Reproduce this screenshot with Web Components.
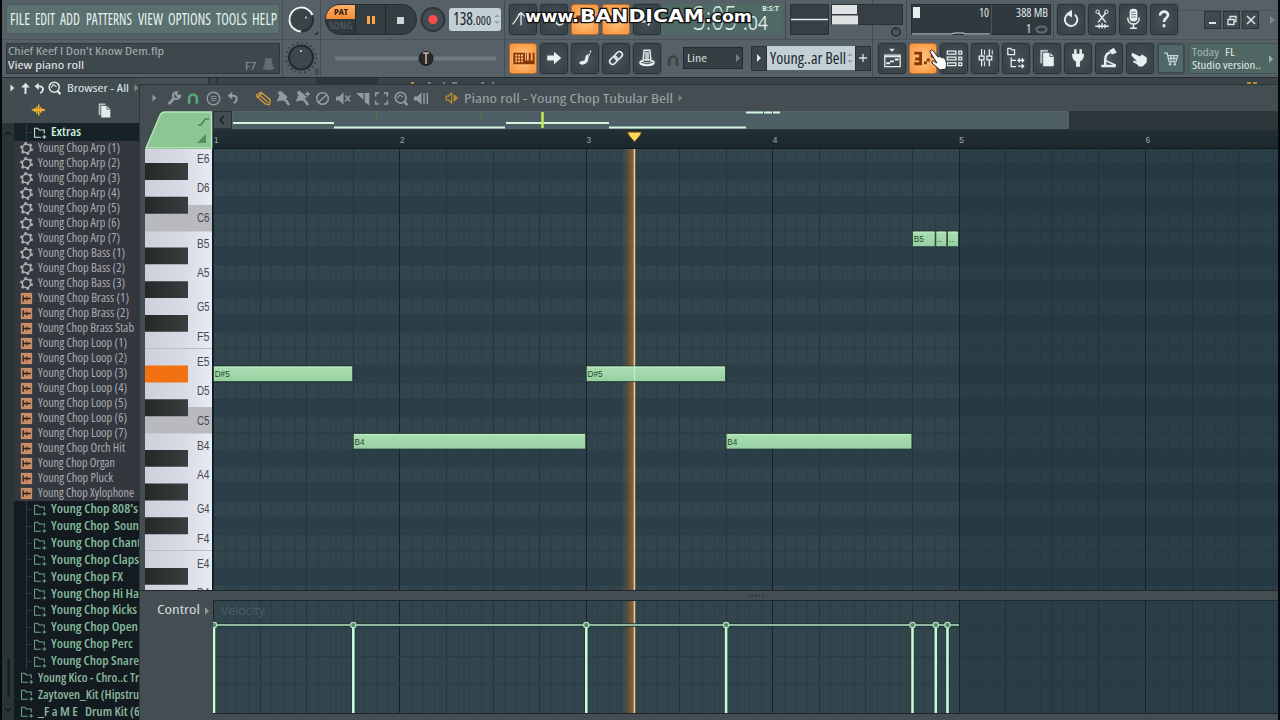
<!DOCTYPE html>
<html lang="en">
<head>
<meta charset="utf-8">
<title>Piano roll</title>
<style>
    html, body { margin: 0; width: 1280px; height: 720px; overflow: hidden; background: #050708; }
    body { font-family: "Open Sans", "Noto Sans", sans-serif; color: #e4eaec; }
</style>
</head>
<body>
<daw-app></daw-app>
<script>
    function attach(host, html) {
        const template = document.createElement('template');
        template.innerHTML = html;
        const root = host.attachShadow({ mode: 'open' });
        root.appendChild(template.content.cloneNode(true));
        return root;
    }

    // one line of text squeezed to a given width
    function t(text, width, size, color, extra) {
        return `<fit-text data-width="${width}" data-size="${size}" style="color:${color};${extra || ''}">${text}</fit-text>`;
    }

    class FitText extends HTMLElement {
        connectedCallback() {
            const w = +this.dataset.width, s = +this.dataset.size, h = Math.round(s * 1.2);
            const root = attach(this, `<style>
                    :host { display: block; flex: none; width: ${w}px; height: ${h}px; font-stretch: condensed; }
                    svg { display: block; overflow: visible; }
                    text { white-space: pre; fill: currentColor; }
                </style>
                <svg width="${w}" height="${h}"><text x="0" y="${(h / 2 + s * .36).toFixed(2)}" font-size="${s}" textLength="${w}" lengthAdjust="spacingAndGlyphs"></text></svg>`);
            root.querySelector('text').textContent = this.textContent;
        }
    }
    customElements.define('fit-text', FitText);

    const line = 'fill="none" stroke="currentColor" ';
    const ICONS = {
        slide: `<path ${line} stroke-width="1.300" d="M3 20C6 18 8 12 11 9M12 8v13M9 10l3-2 4 4"/>`,
        wave: `<path ${line} stroke-width="1.5" d="M4 17h8M16 17a4 4 0 1 0 7-3"/>`,
        block: `<path fill="currentColor" d="M5 11h5v7H5zM12 15h10v3H12z"/>`,
        hook: `<path ${line} stroke-width="2" d="M8 17h10l-3-4m3 4l-3 4"/>`,
        typing: `<path fill="currentColor" d="M4 9h12v12H4zM16 9h2v8h2V9h2v8h2V9h2v12H16z"/><path fill="#ffc283" d="M6 11h2v2H6zM9 11h2v2H9zM12 11h2v2h-2zM6 14h2v2H6zM9 14h2v2H9zM12 14h2v2h-2zM6 17h2v2H6zM9 17h2v2H9zM12 17h2v2h-2zM16 9h1v8h-1z"/>`,
        arrow: `<path fill="currentColor" d="M7 12h7V8l7.500 6.500-7.500 6.500v-4H7z"/>`,
        notes: `<path fill="currentColor" d="M8 20c1-4 5-1 6-4s0-4 3-5l1 2c-1 2 0 5-3 7s-5 2-7 0z"/><path ${line} stroke-width="1.500" stroke-dasharray="2 1.500" d="M18 12l2-5"/>`,
        link: `<g ${line} stroke-width="1.600" transform="rotate(-45 14 14.500)"><rect x="6" y="11.500" width="9" height="6" rx="3"/><rect x="13" y="11.500" width="9" height="6" rx="3"/></g>`,
        metro: `<path ${line} stroke-width="1.500" d="M11 6.500h6l1 10h-8zM13 8v8M15 8v8"/><path fill="currentColor" d="M6 18l3-2 1 2q4 2 8 0l1-2 3 2q1 5-8 5t-8-5"/><path fill="none" stroke="#424d52" d="M8 19q6 3 12 0"/>`,
        playlist: `<path fill="currentColor" d="M11 5h6l-3 3z"/><path ${line} stroke-width="1.300" d="M6.500 11.500h16v12h-16zM6 13h17"/><path fill="currentColor" d="M8 19h4v2H8zM12 17h4v2h-4zM17 15h4v2h-4z"/>`,
        roll: `<path fill="currentColor" d="M5 8h8v14H5v-3h5v-2H6v-3h4v-3H5zM15 18h3v3h-3zM18 15h3v3h-3zM22 11h3v3h-3z"/>`,
        rack: `<path ${line} stroke-width="1.300" d="M7 7.500h9v3H7zM7 13.500h9v3H7zM7 19.500h9v3H7zM19 7.500h3v3h-3zM19 13.500h3v3h-3zM19 19.500h3v3h-3z"/>`,
        mixer: `<path ${line} stroke-width="1.300" d="M10.500 5.500v6.500M10.500 17v6M18.500 5.500v6.500M18.500 17v6M8 12.500h5v4H8zM16 12.500h5v4h-5z"/><path ${line} d="M13.500 6v5M13.500 18v5M21.500 6v5"/>`,
        tree: `<path ${line} stroke-width="1.300" d="M5.500 6V4.500h3l1 1.500h3v5h-7zM9 14v9.500h5M9 17h5M16 17h6M16 23h6M18 15l-2 2 2 2M20 21l2 2-2 2M20 15l2 2-2 2"/>`,
        files: `<path fill="#b4bdc0" d="M7 6h8v14H7z"/><path fill="currentColor" d="M10 9h7l4 4v10H10z"/><path fill="none" stroke="#526065" d="M9.500 22V8.500H17v4.500h4"/>`,
        plug: `<path fill="currentColor" d="M8 10h2V5.500h2.500V10h3V5.500H18V10h2v3q-1 4-4 5v5.500h-4V18q-3-1-4-5z"/>`,
        lamp: `<path fill="currentColor" d="M14 7l5-3 3 5-5 2zM6 21.500h15V24H6z"/><path ${line} stroke-width="2.500" d="M15 9c-5 1-5 5-5 13"/><path ${line} stroke-width="1.500" d="M10 17l11 5"/>`,
        hand: `<path fill="currentColor" d="M6 9l8 4 2-2 5 3v5l-4 4c-3 1-5 0-6-2l-4-2v-2l4 1-6-6z"/>`,
        cart: `<path ${line} stroke-width="1.300" d="M7 9.500h3l2 9h7l2-6.500H11M11 15h9M14 12v6M17 12v6"/><circle cx="13" cy="21" r="1.300" fill="currentColor"/><circle cx="18" cy="21" r="1.300" fill="currentColor"/>`,
        refresh: `<path ${line} stroke-width="2" d="M11 9.500a6.500 6.500 0 1 0 7 .5"/><path fill="currentColor" d="M15 5l-6 4 6 4z"/>`,
        cut: `<path ${line} stroke-width="1.500" d="M10 8l8 10M18 8l-8 10M7 22h14M11 20v4M14 19v5M17 20v4"/><circle cx="9.500" cy="7" r="1.800" ${line}/><circle cx="18.500" cy="7" r="1.800" ${line}/>`,
        mic: `<rect x="10.500" y="4" width="8" height="13" rx="3.500" fill="currentColor"/><path stroke="#6b777b" d="M12 7.500h5M12 10h5M12 12.500h5"/><path ${line} stroke-width="1.500" d="M8.500 13c0 9 12 9 12 0M14.500 20v4M11 24h7"/>`,
        help: `<path ${line} stroke-width="2.800" d="M10 11c0-6 9-5 8 0-1 3-4 3-4 6.500M14 20v3"/>`,
        magnet: `<path ${line} stroke-width="3.500" d="M9 22v-7a5 5 0 0 1 10 0v7"/>`,
        wrench: `<path ${line} stroke-width="3.500" d="M7 21l7-7"/><path ${line} stroke-width="2.500" d="M21 10l-3 2-2-2 1-3c-5 0-6 4-4 7 3 2 8 1 8-4"/>`,
        menu: `<circle cx="14" cy="14.500" r="7.500" ${line} stroke-width="1.700"/><path ${line} d="M10.500 12h7M10.500 14.500h7M10.500 17h7"/>`,
        undo: `<path ${line} stroke-width="2.600" d="M11 11.500h4c6 1 4 8 0 9.500"/><path fill="currentColor" d="M13 6.500v10l-6-5z"/>`,
        pencil: `<path ${line} stroke-width="1.700" d="M6 10l5-3 11 9-1 6-5-1-10-9zM7.500 13l4-5M10 11l9 8"/>`,
        brush: `<path fill="currentColor" d="M6 18l3-7 4-4 6 6-3 3-4 1zM14 13l5 4 3 5-3 1-3-5-4-2z"/><circle cx="10" cy="8" r="2.500" fill="currentColor"/>`,
        brushplus: `<path fill="currentColor" d="M6 18l3-7 4-4 6 6-3 3-4 1zM14 13l5 4 3 5-3 1-3-5-4-2z"/><circle cx="10" cy="8" r="2.500" fill="currentColor"/><path ${line} stroke-width="1.700" d="M17 9h6M20 6v6"/>`,
        none: `<circle cx="14" cy="14.500" r="7" ${line} stroke-width="1.800"/><path ${line} stroke-width="1.800" d="M9 19l10-9"/>`,
        mute: `<path fill="currentColor" d="M5 12h4l5-5v15l-5-5H5z"/><path ${line} stroke-width="1.800" d="M16 11l6 7M22 11l-6 7"/>`,
        slice: `<path fill="currentColor" d="M5 8h9v8zM15.500 8H21v15l-5.500-4z"/>`,
        select: `<path ${line} stroke-width="1.900" d="M7 12V8h4M17 8h4v4M21 17v4h-4M11 21H7v-4"/>`,
        zoom: `<circle cx="13" cy="13.500" r="6.500" ${line} stroke-width="2"/><path ${line} stroke-width="3" d="M17 18l4 4.500"/><path ${line} stroke-width="1.300" d="M9 14l3-4 4 3"/>`,
        play: `<path fill="currentColor" d="M5 12h4l5-5v15l-5-5H5z"/><path ${line} stroke-width="1.800" d="M17 8v13M21 8v13"/>`,
        speaker: `<path ${line} stroke-width="1.600" d="M6.500 12h3l4-4v13l-4-4h-3z"/><path fill="currentColor" d="M16 9l6 5.500-6 5.500z"/>`,
        up: `<path ${line} stroke-width="2.800" d="M14 22V11"/><path fill="currentColor" d="M14 6.500l6 6.500H8z"/>`,
        tri: `<path fill="currentColor" d="M12 10l5 4.500-5 4.500z"/>`,
        sample: `<path stroke="currentColor" stroke-width="1.800" d="M6 14.500h17M10 12v5M12.500 10v9M15 7.500v14M17.500 11v7M20 13v3"/>`,
        gear: `<circle cx="14" cy="14.500" r="7.500" ${line} stroke-width="3" stroke-dasharray="3.400 4.450"/><circle cx="14" cy="14.500" r="5.800" ${line} stroke-width="2.200"/>`,
        wavefile: `<path fill="#c98e68" d="M8 8.500h12v12H8z"/><path fill="#2b2423" d="M9.800 11h1.400v7H9.800zM11 13.800h3v-2.600l1.300 2.600h3.200v1.400h-3.200L14 17.800v-2.600h-3z"/>`,
        folder: `<path ${line} stroke-width="1.300" d="M15 20H7V8.500h4l2 2h6.500V15M17 19.500h5M19.500 17v5"/>`,
        hat: `<path fill="currentColor" d="M10 7h8l1 10 2 1c1 4-15 4-14 0l2-1z"/>`
    };

    class DawIcon extends HTMLElement {
        connectedCallback() {
            const size = this.dataset.size || 28;
            // small icons drop the button margin around the glyph
            const box = size < 28 ? '5 5.5 18 18' : '0 0 28 29';
            attach(this, `<style>
                    :host { display: block; flex: none; width: ${size}px; height: ${size}px; }
                    svg { display: block; overflow: visible; }
                </style>
                <svg width="${size}" height="${size}" viewBox="${box}">${ICONS[this.dataset.name] || ''}</svg>`);
        }
    }
    customElements.define('daw-icon', DawIcon);

    class ToolButton extends HTMLElement {
        connectedCallback() {
            attach(this, `<style>
                    :host { display: block; box-sizing: border-box; flex: none; width: 28px; height: 31px; border: 1px solid #2b3337; border-radius: 3px;
                        background: radial-gradient(#48545a, #343e43); box-shadow: inset 0 0 0 1px #3c474c, 0 0 0 1px #4c565b; color: #e9eef0; }
                    :host([data-on]) { background: radial-gradient(#ffc988, #f98f35); border-color: #b86a2c; box-shadow: inset 0 0 0 1px #ffa04c; color: #853806; }
                    :host([data-shop]) { background: #50686a; color: #c8d4d6; border-color: #3f5153; }
                    daw-icon { margin: 0 -1px; }
                </style>
                <daw-icon data-name="${this.dataset.icon}"></daw-icon>`);
        }
    }
    customElements.define('tool-button', ToolButton);

    const buttons = list => list.map(n => {
        const [name, flag] = n.split(':');
        return `<tool-button data-icon="${name}" ${flag ? 'data-' + flag : ''}></tool-button>`;
    }).join('');

    class MainToolbar extends HTMLElement {
        constructor() {
            super();
            const menu = [['FILE', 20, 5], ['EDIT', 20, 5], ['ADD', 20, 6], ['PATTERNS', 46, 6], ['VIEW', 25, 5], ['OPTIONS', 43, 5], ['TOOLS', 31, 5], ['HELP', 25, 0]];
            attach(this, `<style>
                :host { display: flex; height: 78px; box-sizing: border-box; background: #566067; border-bottom: 1px solid #262d31; }
                .group { flex: none; box-sizing: border-box; display: grid; grid-template-rows: 39px 38px; border-right: 1px solid #434c52; }
                .row { display: flex; align-items: center; box-sizing: border-box; min-width: 0; }
                .row + .row { border-top: 1px solid #495258; }
                .tools + * { border-top: 0; }
                .menu { width: 274px; height: 30px; margin: -1px 0 0 4px; box-sizing: border-box; padding-left: 3px; border: 1px solid #4b5a5c; background: #5a716f; display: flex; align-items: center; }
                .hint { width: 274px; height: 31px; margin: -1px 0 0 4px; box-sizing: border-box; padding: 0 3px 0 1px; border: 1px solid #2f383c; background: #3d474c; display: flex; justify-content: space-between; }
                .hint .f7 { display: flex; align-items: end; gap: 5px; color: #626d72; }
                .knobs .row { justify-content: center; }
                .transport { display: flex; width: 92px; height: 31px; box-sizing: border-box; margin-left: 4px; border: 1px solid #272e32; border-radius: 15px; overflow: hidden; background: #343d42; }
                .transport > div { width: 30px; flex: none; border-right: 1px solid #232a2e; box-sizing: border-box; display: flex; align-items: center; justify-content: center; }
                .transport .mode { flex-direction: column; justify-content: start; background: #30383d; }
                .pat { width: 100%; height: 14px; padding-left: 8px; box-sizing: border-box; background: linear-gradient(#ffb066, #f28b36); }
                .lcd { background: #c3d0d6; border-radius: 3px; box-sizing: border-box; display: flex; align-items: center; }
                .tempo { width: 52px; height: 23px; padding-left: 4px; margin: -1px 0 0 1px; }
                .spin { display: block; margin-left: auto; }
                .slider { width: 183px; height: 38px; }
                .tools { gap: 3px; padding-left: 4px; }
                .time { flex: none; margin: -1px 0 0 3px; background: #4f6965; font-weight: 300; }
                .time text { fill: #dfe9e8; }
                .select { width: 60px; height: 22px; box-sizing: border-box; padding-left: 3px; border: 1px solid #252c30; background: #353e43; display: flex; align-items: center; justify-content: space-between; margin-top: -1px; }
                .small { flex: none; width: 16px; height: 25px; box-sizing: border-box; background: #3b454a; border: 1px solid #2a3236; display: flex; align-items: center; justify-content: center; margin-top: -1px; }
                .win { gap: 2px; padding-left: 26px; }
                .win svg { background: #3f494e; border: 1px solid #2b3337; box-sizing: border-box; }
                .news { width: 89px; height: 31px; margin-left: 3px; box-sizing: border-box; padding: 0 3px; background: #4f6663; border: 1px solid #415250; border-right: 0; display: flex; justify-content: space-between; align-items: center; }
                .news div div { display: flex; gap: 6px; }
                .right { flex: 1; min-width: 0; display: grid; grid-template-rows: 39px 38px; }
            </style>
            <div class="group" style="width:281px">
                <div class="row"><div class="menu">${menu.map(m => t(m[0], m[1], 16, '#e6f1f0', `margin-right:${m[2]}px`)).join('')}</div></div>
                <div class="row"><div class="hint">
                    <div>${t("Chief Keef I Don't Know Dem.flp", 156, 11.5, '#a7afb2')}${t('View piano roll', 76, 11.5, '#e2e7e9')}</div>
                    <div class="f7">${t('F7', 11, 11, '#8b9599')}<daw-icon data-name="hat" data-size="15" style="margin-bottom:1px"></daw-icon></div>
                </div></div>
            </div>
            <div class="group knobs" style="width:38px">
                <div class="row"><svg width="36" height="38"><circle cx="17" cy="18.500" r="12" fill="#3a4348" stroke="#262e32" stroke-width="2"/><path fill="none" stroke="#eef2f3" stroke-width="2" d="M17 30.500A12 12 0 1 1 28.500 14"/><circle cx="22" cy="16.500" r="1" fill="#d9e0e2"/><path fill="#2e363a" d="M34 30v4h-4z"/></svg></div>
                <div class="row"><svg width="36" height="37"><circle cx="17" cy="17.500" r="15" fill="none" stroke="#333c41" stroke-width="2" stroke-dasharray="1.500 3.200"/><circle cx="17" cy="17.500" r="12" fill="#3d464b" stroke="#22292d" stroke-width="2"/><circle cx="17" cy="11" r="1" fill="#d9e0e2"/><path fill="none" stroke="#2e363a" d="M31 30h4M31 32h4M31 34h4"/></svg></div>
            </div>
            <div class="group" style="width:184px">
                <div class="row">
                    <div class="transport">
                        <div class="mode"><div class="pat">${t('PAT', 14, 9, '#2c1c0e', 'font-weight:700;margin-top:1px')}</div>${t('SONG', 23, 9, '#596368', 'margin-top:1px')}</div>
                        <div><svg width="8" height="8"><path fill="#ffa347" d="M0 0h3v8H0zM5 0h3v8H5z"/></svg></div>
                        <div style="border:0"><svg width="8" height="8"><path fill="#cdd5d8" d="M0 1h7v7H0z"/></svg></div>
                    </div>
                    <svg width="30" height="30" style="margin-left:1px"><circle cx="15" cy="14.500" r="11.500" fill="#434c51" stroke="#2d3539" stroke-width="2"/><circle cx="15" cy="14.500" r="4.500" fill="#ff4b4b"/></svg>
                    <div class="lcd tempo">${t('138', 20, 18, '#1d252a')}${t('.000', 18, 12, '#1d252a', 'margin-top:4px')}
                        <svg class="spin" width="7" height="14"><path fill="#98a6ad" d="M0 5l3-3 3 3zM0 9h6l-3 3z"/></svg></div>
                </div>
                <div class="row"><svg class="slider" width="183" height="38"><path stroke="#70797e" stroke-width="4" d="M14 18.500h161"/><circle cx="105" cy="18.500" r="7" fill="#292929" stroke="#171b1d"/><path stroke="#d3b5a5" stroke-width="1.500" d="M105 13v11M102 13h6"/></svg></div>
            </div>
            <div class="group" style="width:368px;grid-template-columns:100%">
                <div class="row">
                    <div class="row tools">${buttons(['slide', 'wave', 'block:on', 'block:on', 'hook'])}</div>
                    <svg class="time" width="121" height="30">
                        <text x="32" y="26" font-size="33" textLength="44" lengthAdjust="spacingAndGlyphs">3:05</text>
                        <text x="82" y="26" font-size="20" textLength="25" lengthAdjust="spacingAndGlyphs" font-weight="400">:04</text>
                        <text x="101" y="7" font-size="7" textLength="17" lengthAdjust="spacingAndGlyphs" font-weight="700">B:S:T</text>
                    </svg>
                    <svg width="85" height="38" style="flex:none;margin-left:5px;overflow:visible"><path stroke="#434c52" d="M-1.500 0v38"/><path fill="#353f44" stroke="#2a3236" d="M3.500 3.500h38v30h-38zM44.500 3.500h71v20h-71z"/><path stroke="#e4eaec" stroke-width="1.500" d="M4 18.500h37"/><path fill="#dfe3e3" d="M45 4h25v9H45zM45 14.500h26v9H45z"/><circle cx="109" cy="31" r="4" fill="none" stroke="#2d363a" stroke-width="2"/><path stroke="#2d363a" d="M109 28v4"/></svg>
                </div>
                <div class="row">
                    <div class="row tools">${buttons(['typing:on', 'arrow', 'notes', 'link', 'metro'])}</div>
                    <daw-icon data-name="magnet" data-size="14" style="color:#394348;margin:2px 3px 0 5px"></daw-icon>
                    <div class="select">${t('Line', 20, 11.5, '#d7dee0')}<svg width="7" height="10"><path fill="#747f84" d="M1 1l4 4-4 4z"/></svg></div>
                    <div class="small" style="margin-left:8px"><svg width="6" height="8"><path fill="#dde4e6" d="M1 0l4 4-4 4z"/></svg></div>
                    <div class="lcd" style="width:88px;height:24px;border-radius:0;padding:0 1px 0 3px;margin-top:-2px">${t('Young..ar Bell', 76, 17, '#1d272c')}<svg class="spin" width="7" height="14"><path fill="#98a6ad" d="M0 5l3-3 3 3zM0 9h6l-3 3z"/></svg></div>
                    <div class="small"><svg width="8" height="8"><path stroke="#dde4e6" stroke-width="1.300" d="M4 0v8M0 4h8"/></svg></div>
                </div>
            </div>
            <div class="right">
                <div class="row">
                    <svg width="181" height="38"><path stroke="#434c52" d="M33.500 0v38M180.500 0v38"/><path fill="#2f393e" stroke="#262d31" d="M38.500 3.500h139v30h-139z"/><path stroke="#4b555a" d="M118.500 4v30"/><path fill="#e8edef" d="M40 6h7v11h-7z"/><path fill="none" stroke="#d3dadd" stroke-width="1.200" d="M39 33h39l4-1h8l2 1h25"/>
                        <g font-size="12" fill="#dfe5e7" text-anchor="end" font-stretch="condensed"><text x="116" y="16" textLength="10" lengthAdjust="spacingAndGlyphs">10</text><text x="175" y="16" textLength="32" lengthAdjust="spacingAndGlyphs">388 MB</text><text x="158" y="32">1</text></g><ellipse cx="168.500" cy="28.500" rx="5" ry="3" fill="none" stroke="#646e73" stroke-width="2"/></svg>
                    <div class="row tools" style="padding-left:3px">${buttons(['refresh', 'cut', 'mic', 'help'])}</div>
                    <div class="row win">
                        <svg width="17" height="18"><path stroke="#dfe5e7" stroke-width="2" d="M4 11h7"/></svg>
                        <svg width="17" height="18"><path fill="none" stroke="#dfe5e7" stroke-width="1.300" d="M4 7.500h6v5H4zM6 7V4.500h6v5h-2"/></svg>
                        <svg width="17" height="18"><path stroke="#dfe5e7" stroke-width="1.500" d="M4 4l8 8M12 4l-8 8"/></svg>
                        <svg width="6" height="10" style="background:none;border:0;margin-left:9px"><path fill="#7d878c" d="M0 1l5 4-5 4z"/></svg>
                    </div>
                </div>
                <div class="row">
                    <div class="row tools" style="padding-left:5px">${buttons(['playlist', 'roll:on', 'rack', 'mixer', 'tree', 'files', 'plug', 'lamp', 'hand', 'cart:shop'])}</div>
                    <div class="news"><div><div>${t('Today', 27, 11, '#a3b7b6')}${t('FL', 10, 11, '#dce8e7')}</div>${t('Studio version..', 69, 11, '#dce8e7')}</div><svg width="5" height="8"><path fill="#9eaead" d="M0 0l4 4-4 4z"/></svg></div>
                </div>
            </div>`);
        }
    }
    customElements.define('main-toolbar', MainToolbar);

    class BrowserPanel extends HTMLElement {
        constructor() {
            super();
            const presets = [];
            for (let i = 1; i <= 7; i++) presets.push(['gear', `Young Chop Arp (${i})`, 82]);
            for (let i = 1; i <= 3; i++) presets.push(['gear', `Young Chop Bass (${i})`, 87]);
            for (let i = 1; i <= 2; i++) presets.push(['wavefile', `Young Chop Brass (${i})`, 91]);
            presets.push(['wavefile', 'Young Chop Brass Stab', 96]);
            for (let i = 1; i <= 7; i++) presets.push(['wavefile', `Young Chop Loop (${i})`, 89]);
            presets.push(['wavefile', 'Young Chop Orch Hit', 87], ['wavefile', 'Young Chop Organ', 77], ['wavefile', 'Young Chop Pluck', 75], ['wavefile', 'Young Chop Xylophone', 96]);
            const folders = [["Young Chop 808's", 87], ['Young Chop  Soun', 88], ['Young Chop Chant', 90], ['Young Chop Claps', 88], ['Young Chop FX', 72], ['Young Chop Hi Ha', 88], ['Young Chop Kicks', 86], ['Young Chop Open', 87], ['Young Chop Perc', 82], ['Young Chop Snare', 88]];
            const roots = [['Young Kico - Chro..c Tr', 101], ['Zaytoven_Kit (Hipstru', 101], ['_F a M E   Drum Kit (6', 102]];
            attach(this, `<style>
                :host { display: grid; grid-template-rows: 45px 597px; width: 138px; height: 642px; overflow: hidden; background: #414c51; }
                header { display: grid; grid-template-rows: 20px 24px; }
                header div { display: flex; align-items: center; }
                .body { display: grid; grid-template-columns: 12px 126px; overflow: hidden; }
                .scroll { background: #293438; display: flex; flex-direction: column; justify-content: space-between; align-items: center; }
                .list { background: #131b20; }
                .row { display: flex; align-items: center; height: 15px; }
                .presets { background: #34373e; padding-bottom: .5px; }
                .presets .row { padding-left: 4px; gap: 3px; }
                .presets daw-icon { color: #adb2b6; }
                .presets fit-text { margin-top: -1px; }
                .list .extras { height: 17px; background: #162228; padding-top: .5px; }
                .folder { height: 16.850px; padding-left: 12px; font-weight: 650; }
                .folder.sub::before { content: ""; flex: none; width: 5px; height: 17px; border-left: 1px solid #2e393e; background: linear-gradient(#2e393e, #2e393e) 0 50% / 5px 1px no-repeat; }
                .folder daw-icon { color: #6fa487; }
                .root { padding-left: 5px; font-weight: 600; }
            </style>
            <header>
                <div style="color:#dfe5e7;padding-left:3px"><daw-icon data-name="tri" data-size="14"></daw-icon><daw-icon data-name="up" data-size="13"></daw-icon><daw-icon data-name="undo" data-size="13" style="margin-left:1px"></daw-icon><daw-icon data-name="zoom" data-size="14" style="margin-left:2px"></daw-icon>${t('Browser - All', 62, 11.5, '#dfe5e7', 'margin:0 0 0 5px')}<daw-icon data-name="tri" data-size="14" style="color:#7e888c"></daw-icon></div>
                <div style="padding-left:29px;gap:52px"><daw-icon data-name="sample" data-size="14" style="color:#ffb52e"></daw-icon><daw-icon data-name="files" data-size="15" style="color:#e4eaec"></daw-icon></div>
            </header>
            <div class="body">
                <div class="scroll"><svg width="8" height="18"><path fill="none" stroke="#11191c" stroke-width="1.500" d="M1 12l3-3 3 3"/></svg><svg width="8" height="66"><path fill="none" stroke="#11191c" stroke-width="2" d="M4.500 5v38"/><path fill="none" stroke="#11191c" stroke-width="1.500" d="M1 54l3 3 3-3"/></svg></div>
                <div class="list">
                    <div class="row folder sub extras"><daw-icon data-name="folder" data-size="14" style="color:#cfe6d8;margin:1px 4px 0 1px"></daw-icon>${t('Extras', 30, 12, '#cdf0dc')}</div>
                    <div class="presets">${presets.map(p => `<div class="row"><daw-icon data-name="${p[0]}" data-size="${p[0] === 'gear' ? 13 : 17}" style="${p[0] === 'gear' ? 'margin:0 2px' : ''}"></daw-icon>${t(p[1], p[2], 12, '#a9acb1')}</div>`).join('')}</div>
                    ${folders.map(f => `<div class="row folder sub"><daw-icon data-name="folder" data-size="14" style="margin:1px 4px 0 1px"></daw-icon>${t(f[0], f[1], 12, '#84b99a')}</div>`).join('')}
                    ${roots.map(f => `<div class="row folder root"><daw-icon data-name="folder" data-size="14" style="margin:1px 4px 0 1px"></daw-icon>${t(f[0], f[1], 12, '#8cb69f')}</div>`).join('')}
                </div>
            </div>`);
        }
    }
    customElements.define('browser-panel', BrowserPanel);

    const ROW = 16.87;      // height of one semitone
    const STEP = 11.65;     // width of one step, 16 steps in a bar
    const SHARPS = [1, 3, 6, 8, 10];    // counted down from E

    class PianoKeys extends HTMLElement {
        constructor() {
            super();
            let keys = '';
            for (const y of [82, 199.5, 284, 401.5]) keys += `<path stroke="#b9bdc7" d="M0 ${y}h67"/>`;
            for (const y of [56, 258]) keys += `<path fill="#b9bac0" d="M0 ${y}h67v26H0z"/>`;
            for (let i = 0; i < 27; i++) {
                if (!SHARPS.includes(i % 12)) continue;
                const y = (-2.8 + i * ROW).toFixed(1);
                keys += i === 13 ? `<path fill="#f27112" d="M0 ${y}h43v16.900H0z"/>` : `<path fill="url(#black)" d="M0 ${y}h43v16.900H0z"/>`;
            }
            const labels = [['E6', 159], ['D6', 188], ['C6', 218], ['B5', 243.5], ['A5', 272.5], ['G5', 306.5], ['F5', 336.5], ['E5', 361.5], ['D5', 390.5], ['C5', 420.5], ['B4', 446], ['A4', 475], ['G4', 509], ['F4', 539], ['E4', 564], ['D4', 593]];
            attach(this, `<style>
                :host { display: block; width: 67px; height: 441px; overflow: hidden; border-right: 1px solid #101a1e; }
                svg { display: block; }
                text { font: 12px "Liberation Sans", sans-serif; fill: #454a52; }
            </style>
            <svg width="67" height="441">
                <defs><linearGradient id="black"><stop offset="0" stop-color="#252829"/><stop offset="1" stop-color="#3b3e3f"/></linearGradient>
                <linearGradient id="white"><stop offset="0" stop-color="#cdd0da"/><stop offset=".6" stop-color="#d9dbe6"/><stop offset="1" stop-color="#e9ebf3"/></linearGradient></defs>
                <path fill="url(#white)" d="M0 0h67v441H0z"/>${keys}
                ${labels.map(l => `<text x="52" y="${l[1] - 149 + 4.300}" textLength="12.500" lengthAdjust="spacingAndGlyphs">${l[0]}</text>`).join('')}
            </svg>`);
        }
    }
    customElements.define('piano-keys', PianoKeys);

    // vertical lines for steps, beats and bars, shared by the note grid and the control lane
    function timeLines(height) {
        let s = '';
        for (let i = 0; i * STEP < 1065; i++) {
            const color = i % 16 === 0 ? '#12232b' : i % 4 === 0 ? '#223640' : '#2a3e47';
            s += `<path stroke="${color}" d="M${Math.round(i * STEP) + .5} 0v${height}"/>`;
        }
        return s;
    }

    const playhead = h => `<rect x="408" width="13" height="${h}" fill="url(#glow)"/><path stroke="#f0c8a0" stroke-width="1.500" d="M421.500 0v${h}"/>`;
    const glow = '<defs><linearGradient id="glow"><stop offset="0" stop-color="#8a5a2a" stop-opacity="0"/><stop offset=".5" stop-color="#85602f" stop-opacity=".4"/><stop offset="1" stop-color="#a46c35" stop-opacity=".95"/></linearGradient></defs>';

    // start step, length, semitones below E6, label
    const NOTES = [[0, 12, 13, 'D#5'], [12, 20, 17, 'B4'], [32, 12, 13, 'D#5'], [44, 16, 17, 'B4'], [60, 2, 5, 'B5'], [62, 1, 5, '..'], [63, 1, 5, '..']];

    class NoteGrid extends HTMLElement {
        constructor() {
            super();
            let rows = '';
            for (let i = 0; i < 27; i++) {
                const y = (-2.8 + i * ROW).toFixed(1);
                if (SHARPS.includes(i % 12)) rows += `<path fill="#2c3f48" d="M0 ${y}h1065v16.900H0z"/>`;
                rows += `<path stroke="#293d46" d="M0 ${y}h1065"/>`;
            }
            const notes = NOTES.map(n => {
                const x = n[0] * STEP + .5, y = -3 + n[2] * ROW + .8;
                return `<rect x="${x}" y="${y}" width="${n[1] * STEP - .6}" height="15.500" rx="1" fill="url(#note)" stroke="#213a32" stroke-width=".8"/>
                    <path stroke="#c0efc6" d="M${x + 1} ${y + 1}h${n[1] * STEP - 3}"/><text x="${x + 1.200}" y="${y + 11}" ${n[3] === '..' ? '' : `textLength="${n[3].length * 5}" lengthAdjust="spacingAndGlyphs"`}>${n[3]}</text>`;
            }).join('');
            attach(this, `<style>
                :host { display: block; height: 441px; background: #32454d; overflow: hidden; }
                svg { display: block; }
                text { font: 9px "Liberation Sans", sans-serif; fill: #264b34; }
            </style>
            <svg width="1065" height="441">${glow}<defs><linearGradient id="note" x2="0" y2="1"><stop offset="0" stop-color="#aadfb2"/><stop offset="1" stop-color="#98cfa1"/></linearGradient></defs>
                ${rows}${timeLines(441)}<path fill="#142c38" fill-opacity=".25" d="M746 0h319v441H746z"/>${playhead(441)}${notes}
                <path stroke="#d5f2cf" stroke-opacity=".6" stroke-width="1.500" d="M421.500 217v15"/></svg>`);
        }
    }
    customElements.define('note-grid', NoteGrid);

    class ControlLane extends HTMLElement {
        constructor() {
            super();
            const stems = NOTES.map(n => {
                const x = n[0] * STEP + (n[0] ? .5 : 1);
                return `<path stroke="#1f4034" stroke-width="4.500" d="M${x} 25v89"/><path stroke="#cdf7da" stroke-width="2.600" d="M${x} 26v88"/><circle cx="${x}" cy="24" r="2.700" fill="#4f8a61" stroke="#b4dcc0" stroke-width="1.200"/>`;
            }).join('');
            attach(this, `<style>
                :host { display: block; height: 114px; background: #32454d; border-top: 1px solid #1c2a30; border-bottom: 1px solid #1c2529; box-sizing: border-box; overflow: hidden; }
                svg { display: block; }
            </style>
            <svg width="1065" height="114">${glow}${timeLines(114)}<path stroke="#293d46" d="M0 27.500h1065M0 55.500h1065M0 83.500h1065"/>
                <path fill="#142c38" fill-opacity=".25" d="M746 0h319v114H746z"/>${playhead(114)}
                <text x="8" y="13.500" font-size="12" fill="#4c5c64" textLength="44" lengthAdjust="spacingAndGlyphs">Velocity</text>
                <path stroke="#1b3930" stroke-width="3.500" d="M0 24h746"/><path stroke="#bce1c8" stroke-width="1.500" d="M0 24h746"/>${stems}</svg>`);
        }
    }
    customElements.define('control-lane', ControlLane);

    class TimeRuler extends HTMLElement {
        constructor() {
            super();
            attach(this, `<style>
                :host { display: grid; grid-template-rows: 19px 19px; height: 38px; }
                svg { display: block; }
                .ruler { background: linear-gradient(#222f34, #1b282e); border-bottom: 1px solid #111c21; box-sizing: border-box; }
                .bars { overflow: visible; }
            </style>
            <svg width="1065" height="19">
                <path fill="#2b353a" d="M0 0h1065v19H0z"/><path fill="#424c51" stroke="#293337" d="M.5.5h18v17H.5z"/><path fill="none" stroke="#1b2327" stroke-width="1.500" d="M11 5L7 9l4 4"/>
                <path fill="#4d5f64" stroke="#536469" d="M19.500.5h836v17h-836z"/>
                <path stroke="#4f7a40" d="M163.500 0v8M268.500 0v8"/>
                <path stroke="#d2f5df" stroke-width="1.800" d="M20 12h101M293 12h103M121 16.500h171M396 16.500h137M533 1.500h17M551 1.500h8M560 1.500h7"/>
                <path stroke="#c7e850" stroke-width="2.500" d="M329.500 1v16"/>
            </svg>
            <div class="ruler"><svg class="bars" width="1065" height="19">
                <g font-size="9.500" font-family="Liberation Sans" fill="#a2abae">${[1, 2, 3, 4, 5, 6].map((n, i) => `<text x="${i ? i * 186.4 + .6 : 1}" y="13" textLength="4.600" lengthAdjust="spacingAndGlyphs">${n}</text>`).join('')}</g>
                <path fill="#ffd75a" stroke="#5b4313" d="M414.500 2h14l-1 3-6 7-6-7z"/></svg></div>`);
        }
    }
    customElements.define('time-ruler', TimeRuler);

    class PianoRoll extends HTMLElement {
        constructor() {
            super();
            // name and centre of each title bar icon
            const icons = [['tri', 154], ['wrench', 174], ['magnet', 193], ['menu', 213], ['undo', 233], ['pencil', 263], ['brush', 283], ['brushplus', 302.5], ['none', 322], ['mute', 343], ['slice', 363], ['select', 381.5], ['zoom', 401], ['play', 421.5], ['speaker', 452]];
            let edge = 140;
            const bar = icons.map(([name, x]) => {
                const size = ['tri', 'magnet', 'undo', 'speaker'].includes(name) ? 14 : 15;
                const gap = x - size / 2 - edge;
                edge = x + size / 2;
                const color = name === 'magnet' ? '#58a876' : name === 'pencil' ? '#cf9a3b' : name === 'speaker' ? '#b98d32' : '#929b9f';
                return `<daw-icon data-name="${name}" data-size="${size}" style="margin-left:${gap}px;color:${color}"></daw-icon>`;
            }).join('');
            attach(this, `<style>
                :host { display: grid; grid-template-columns: 5px 68px 1065px; grid-template-rows: 27px 38px 441px 10px 114px 6px; background: #444d52; border-left: 1px solid #2d3639; margin-left: -1px; }
                .title { grid-column: 1 / -1; display: flex; align-items: center; border-top: 1px solid #2b3438; box-sizing: border-box; }
                .corner, piano-keys, .name { grid-column: 2; }
                .divider { grid-column: 1 / -1; display: flex; align-items: center; padding-left: 608px; border-top: 1px solid #22292d; box-sizing: border-box; }
                .name { display: flex; align-items: start; padding: 3px 0 0 12px; gap: 5px; }
                svg { display: block; }
            </style>
            <div class="title">${bar}${t('Piano roll - Young Chop Tubular Bell', 209, 12.5, '#9ca4a7', 'margin:0 0 0 5px')}<daw-icon data-name="tri" data-size="14" style="color:#737d82"></daw-icon></div>
            <svg class="corner" width="68" height="38"><path fill="#8cc793" stroke="#b7e8bc" stroke-width="1.300" d="M1 37L15 4Q17 1 20 1h46.500v36z"/><path fill="none" stroke="#4c855c" stroke-width="1.500" d="M53 14h3l4-6h4"/><path fill="#528c61" d="M61 23v9h-9z"/></svg>
            <time-ruler></time-ruler>
            <piano-keys></piano-keys>
            <note-grid></note-grid>
            <div class="divider"><svg width="18" height="3"><path stroke="#283034" stroke-width="1.500" stroke-dasharray="1.500 2" d="M0 1.500h17"/></svg></div>
            <div class="name">${t('Control', 43, 12, '#d2d8db')}<svg width="5" height="14"><path fill="#8c969a" d="M0 4l4 4-4 4z"/></svg></div>
            <control-lane></control-lane>`);
        }
    }
    customElements.define('piano-roll', PianoRoll);

    class DawApp extends HTMLElement {
        constructor() {
            super();
            attach(this, `<style>
                :host { display: grid; position: relative; box-sizing: border-box; width: 1278px; height: 720px; padding-left: 2px; grid-template-rows: 78px 642px; overflow: hidden; }
                .work { display: grid; grid-template-columns: 138px 1138px; }
                .stack { display: grid; grid-template-rows: 6px 636px; background: #3a4348; overflow: visible; }
                .behind { overflow: hidden; }
                .watermark { position: absolute; left: 525px; top: 0; }
                .watermark text { font-family: "DejaVu Sans", sans-serif; font-weight: 700; fill: #fff; stroke: #111; stroke-width: 2.500; paint-order: stroke; }
                .cursor { position: absolute; left: 929px; top: 48px; }
            </style>
            <main-toolbar></main-toolbar>
            <div class="work">
                <browser-panel></browser-panel>
                <div class="stack">
                    <svg class="behind" width="1138" height="6"><path fill="#465056" d="M0 0h70v6H0z"/><path fill="#2d363a" d="M176 0h62v6h-62zM68 0h2v6h-2zM76 0h2v6h-2z"/><path fill="#727b7f" d="M288 4h3v2h-3zM303 4h2v2h-2zM312 4h5v2h-5zM341 4h3v2h-3zM352 4h2v2h-2z"/><path fill="#b98d32" d="M271 4h3v2h-3zM1107 4h4v2h-4zM1113 4h4v2h-4z"/></svg>
                    <piano-roll></piano-roll>
                </div>
            </div>
            <svg class="watermark" width="230" height="32"><text x="0" y="22" font-size="16" textLength="54" lengthAdjust="spacingAndGlyphs">www.</text><text x="55" y="22" font-size="18.500" textLength="124" lengthAdjust="spacingAndGlyphs">BANDICAM</text><text x="180" y="22" font-size="15" textLength="47" lengthAdjust="spacingAndGlyphs">.com</text></svg>
            <svg class="cursor" width="20" height="24"><path fill="#fff" stroke="#222" d="M1 4c0-3 3-2 4 0l4 5c2-1 3 0 4 1 2-1 3 1 4 3 1 4 0 5 0 8l-6 1-8-7c-1-2 1-3 3-1l2 1z"/></svg>`);
        }
    }
    customElements.define('daw-app', DawApp);
</script>
</body>
</html>
